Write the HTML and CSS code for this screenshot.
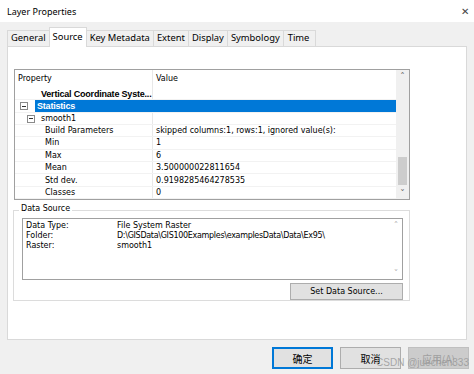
FILE: index.html
```html
<!DOCTYPE html>
<html>
<head>
<meta charset="utf-8">
<link rel="stylesheet" href="styles.css">
</head>
<body>
<div class="window">
  <div class="titlebar">
    <span class="title">Layer Properties</span>
    <span class="close">✕</span>
  </div>
  <div class="tabs">
    <div class="tab">General</div>
    <div class="tab active">Source</div>
    <div class="tab">Key Metadata</div>
    <div class="tab">Extent</div>
    <div class="tab">Display</div>
    <div class="tab">Symbology</div>
    <div class="tab last">Time</div>
  </div>
  <div class="panel">
    <div class="grid">
      <div class="grid-main">
        <div class="grow header">
          <div class="cprop">Property</div>
          <div class="cval">Value</div>
        </div>
        <div class="grow">
          <div class="cprop"><span class="ind2 bold">Vertical Coordinate Syste...</span></div>
          <div class="cval"></div>
        </div>
        <div class="grow sel">
          <span class="exp e1"></span>
          <div class="cprop nopad"><span class="gut"></span><span class="selbox"><span class="bold white">Statistics</span></span></div>
          <div class="cval sel-cell"></div>
        </div>
        <div class="grow">
          <span class="exp e2"></span>
          <div class="cprop"><span class="ind1">smooth1</span></div>
          <div class="cval"></div>
        </div>
        <div class="grow">
          <div class="cprop"><span class="ind3">Build Parameters</span></div>
          <div class="cval">skipped columns:1, rows:1, ignored value(s):</div>
        </div>
        <div class="grow">
          <div class="cprop"><span class="ind4">Min</span></div>
          <div class="cval">1</div>
        </div>
        <div class="grow">
          <div class="cprop"><span class="ind4">Max</span></div>
          <div class="cval">6</div>
        </div>
        <div class="grow">
          <div class="cprop"><span class="ind4">Mean</span></div>
          <div class="cval">3.500000022811654</div>
        </div>
        <div class="grow">
          <div class="cprop"><span class="ind4">Std dev.</span></div>
          <div class="cval">0.9198285464278535</div>
        </div>
        <div class="grow">
          <div class="cprop"><span class="ind4">Classes</span></div>
          <div class="cval">0</div>
        </div>
      </div>
      <div class="vscroll">
        <span class="arrow">˄</span>
        <div class="track"><div class="thumb"></div></div>
        <span class="arrow">˅</span>
      </div>
    </div>
    <div class="group">
      <div class="group-label">Data Source</div>
      <div class="textbox">
        <div class="tb-lines">
          <div class="tb-line"><span class="k">Data Type:</span><span>File System Raster</span></div>
          <div class="tb-line"><span class="k">Folder:</span><span class="path">D:\GISData\GIS100Examples\examplesData\Data\Ex95\</span></div>
          <div class="tb-line"><span class="k">Raster:</span><span>smooth1</span></div>
        </div>
        <div class="tb-scroll">
          <span class="arrow light">˄</span>
          <span class="arrow light">˅</span>
        </div>
      </div>
      <div class="btnrow">
        <div class="btn set">Set Data Source...</div>
      </div>
    </div>
  </div>
  <div class="footer">
    <div class="fbtn primary">确定</div>
    <div class="fbtn">取消</div>
    <div class="fbtn disabled">应用(A)</div>
    <span class="watermark">CSDN @juechen333</span>
  </div>
</div>
</body>
</html>
```
FILE: styles.css
```css
* { box-sizing: border-box; }
html, body { margin: 0; padding: 0; }
body {
  width: 474px;
  height: 374px;
  background: #f0f0f0;
  font-family: "Noto Sans", "Noto Sans CJK SC", sans-serif;
  color: #000;
  overflow: hidden;
}
.window { width: 474px; height: 374px; display: flex; flex-direction: column; }
.titlebar {
  height: 22px;
  background: #fff;
  display: flex;
  align-items: center;
  justify-content: space-between;
  padding: 0 5px 0 7px;
  font-size: 9px;
}
.close { font-size: 10px; color: #444; }

.tabs {
  display: flex;
  align-items: flex-end;
  margin: 5px 0 0 7px;
  height: 19px;
}
.tab {
  height: 16px;
  padding: 0 3px;
  border: 1px solid #d9d9d9;
  border-bottom: none;
  margin-right: -1px;
  font-size: 9.4px;
  line-height: 14px;
  background: #f0f0f0;
}
.tab.last { padding: 0 6px 0 4px; }
.tab.active {
  background: #fff;
  position: relative;
  z-index: 2;
  margin-bottom: -1px;
  height: 20px;
  line-height: 17px;
}
.panel {
  margin: 0 7px 0 7px;
  height: 294px;
  background: #fff;
  border: 1px solid #d9d9d9;
  padding: 22px 0 0 6px;
  position: relative;
}
.grid {
  width: 396px;
  height: 131px;
  border: 1px solid #a0a0a0;
  display: flex;
  font-family: "DejaVu Sans", sans-serif;
  font-size: 8px;
}
.grid-main { flex: 1; display: flex; flex-direction: column; }
.grow {
  display: flex;
  height: 12.4px;
  align-items: stretch;
  position: relative;
  border-bottom: 1px solid #f2f2f2;
}
.grow.header { height: 18px; border-bottom: none; }
.cprop {
  width: 138px;
  border-right: 1px solid #e8e8e8;
  padding-left: 20px;
  display: flex;
  align-items: center;
  white-space: nowrap;
  overflow: hidden;
}
.cprop.nopad { padding-left: 0; border-right-color: #0078d7; }
.gut { width: 20px; height: 100%; background: #fff; flex: none; }
.selbox {
  flex: 1;
  height: 100%;
  background: #0078d7;
  display: flex;
  align-items: center;
  padding-left: 2px;
}
.header .cprop { padding-left: 3px; }
.cval {
  flex: 1;
  padding-left: 3px;
  display: flex;
  align-items: center;
  white-space: nowrap;
}
.bold {
  font-family: "Liberation Sans", sans-serif;
  font-weight: bold;
  font-size: 9px;
  letter-spacing: -0.2px;
}
.white { color: #fff; }
.ind1 { margin-left: 6px; }
.ind2 { margin-left: 6px; }
.ind3 { margin-left: 10px; }
.ind4 { margin-left: 10px; }
.sel-cell { background: #0078d7; }
.exp {
  position: absolute;
  top: 2px;
  width: 8px;
  height: 8px;
  border: 1px solid #8a8a8a;
  background: #fff;
  z-index: 2;
}
.exp::after {
  content: "";
  position: absolute;
  left: 1px;
  right: 1px;
  top: 2.5px;
  height: 1px;
  background: #333;
}
.e1 { left: 5px; }
.e2 { left: 12px; }
.vscroll {
  width: 13px;
  background: #f0f0f0;
  display: flex;
  flex-direction: column;
  align-items: center;
}
.arrow { font-size: 9px; line-height: 12px; height: 12px; color: #606060; }
.arrow.light { color: #b0b0b0; }
.track { flex: 1; width: 100%; display: flex; flex-direction: column; justify-content: flex-end; padding-bottom: 2px; }
.thumb { width: 9px; height: 28px; margin: 0 auto; background: #cdcdcd; }

.group {
  margin-top: 10px;
  width: 397px;
  margin-left: -1px;
  border: 1px solid #dcdcdc;
  height: 91px;
  position: relative;
  padding: 7px 6px 0 8px;
}
.group-label {
  position: absolute;
  top: -7px;
  left: 5px;
  background: #fff;
  padding: 0 2px;
  font-family: "DejaVu Sans", sans-serif;
  font-size: 8px;
}
.textbox {
  height: 62px;
  border: 1px solid #a0a0a0;
  display: flex;
  font-family: "DejaVu Sans", sans-serif;
  font-size: 8px;
}
.tb-lines { flex: 1; padding: 2px 0 0 3px; }
.tb-line { height: 10px; line-height: 10px; display: flex; white-space: nowrap; }
.tb-line .k { width: 91px; }
.path { letter-spacing: -0.3px; }
.tb-scroll {
  width: 12px;
  display: flex;
  flex-direction: column;
  justify-content: space-between;
  align-items: center;
}
.btnrow { display: flex; justify-content: flex-end; margin-top: 3px; }
.btn {
  width: 113px;
  height: 17px;
  background: #e1e1e1;
  border: 1px solid #adadad;
  font-family: "DejaVu Sans", sans-serif;
  font-size: 8px;
  display: flex;
  align-items: center;
  justify-content: center;
}

.footer {
  flex: 1;
  display: flex;
  justify-content: flex-end;
  align-items: flex-start;
  padding: 7px 5px 0 0;
  gap: 7px;
  position: relative;
}
.fbtn {
  width: 61px;
  height: 22px;
  background: #e1e1e1;
  border: 1px solid #adadad;
  font-size: 10px;
  display: flex;
  align-items: center;
  justify-content: center;
  font-family: "Noto Sans CJK SC", sans-serif;
}
.fbtn.primary { border: 2px solid #0078d7; }
.fbtn.disabled { background: #cccccc; border-color: #bfbfbf; color: #a0a0a0; }
.watermark {
  position: absolute;
  right: 5px;
  top: 17px;
  font-family: "Liberation Sans", sans-serif;
  font-size: 10px;
  color: rgba(150,150,150,0.8);
}
```
